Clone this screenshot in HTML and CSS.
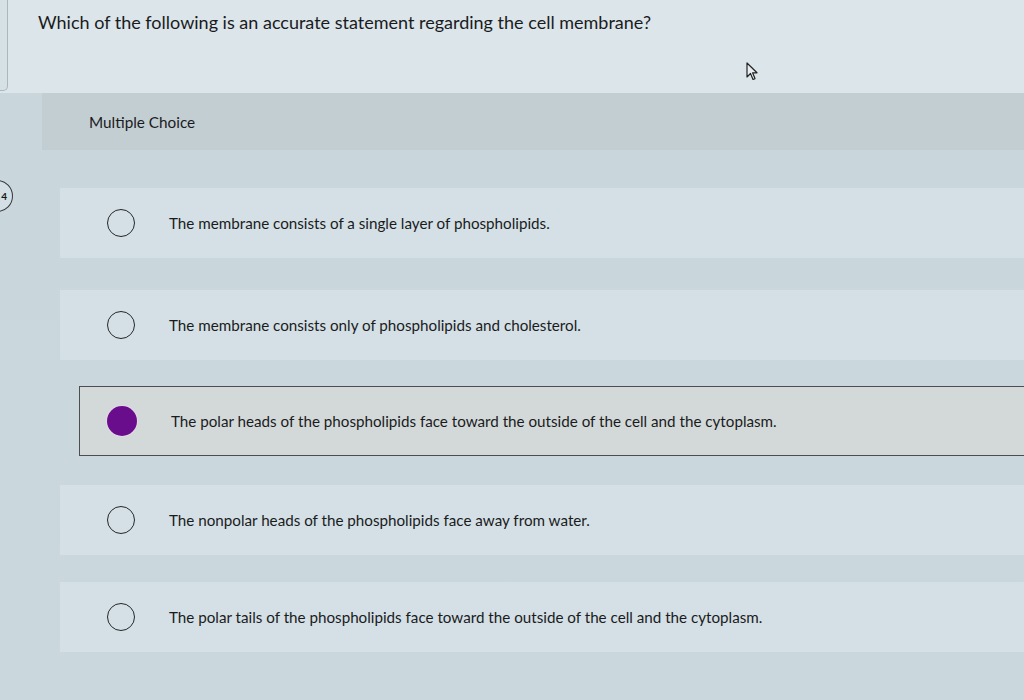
FILE: index.html
```
<!DOCTYPE html>
<html>
<head>
<meta charset="utf-8">
<link rel="stylesheet" href="styles.css">
</head>
<body>
<div class="screen">
  <div class="rail">
    <div class="rail-tab"></div>
    <div class="rail-badge"><span>4</span></div>
  </div>
  <div class="main">
    <div class="question">
      <p class="q-text">Which of the following is an accurate statement regarding the cell membrane?</p>
    </div>
    <div class="band"><span class="band-label">Multiple Choice</span></div>
    <div class="options">
      <div class="option"><span class="radio"></span><span class="opt-text">The membrane consists of a single layer of phospholipids.</span></div>
      <div class="sep s1"></div>
      <div class="option"><span class="radio"></span><span class="opt-text">The membrane consists only of phospholipids and cholesterol.</span></div>
      <div class="sep s2"></div>
      <div class="option selected"><span class="radio filled"></span><span class="opt-text">The polar heads of the phospholipids face toward the outside of the cell and the cytoplasm.</span></div>
      <div class="sep s3"></div>
      <div class="option"><span class="radio"></span><span class="opt-text">The nonpolar heads of the phospholipids face away from water.</span></div>
      <div class="sep s4"></div>
      <div class="option"><span class="radio"></span><span class="opt-text">The polar tails of the phospholipids face toward the outside of the cell and the cytoplasm.</span></div>
    </div>
  </div>
  <svg class="cursor" width="12" height="19" viewBox="0 0 12 19"><path d="M1 1 L1 15 L4.5 11.5 L7 17.5 L9 16.6 L6.6 10.8 L11 10.8 Z" fill="#e8eef0" stroke="#222" stroke-width="1.2" stroke-linejoin="round"/></svg>
</div>
</body>
</html>
```
FILE: styles.css
```
html, body {
  margin: 0;
  padding: 0;
}
body {
  width: 1024px;
  height: 700px;
  overflow: hidden;
  background: #c9d7dd;
  font-family: Lato, "Open Sans", sans-serif;
  color: #151618;
}
.screen {
  position: relative;
  display: flex;
  width: 1024px;
  height: 700px;
  background: linear-gradient(#dbe5ea 0, #dbe5ea 93px, #c9d7dd 93px, #cad8de 700px);
}
.rail {
  position: relative;
  width: 10px;
  flex: none;
}
.rail-tab {
  width: 7px;
  height: 90px;
  border-right: 1px solid #a9b8be;
  border-bottom: 1px solid #a9b8be;
  border-bottom-right-radius: 5px;
  background: #d6e1e6;
}
.rail-badge {
  position: absolute;
  left: -18px;
  top: 180px;
  width: 29px;
  height: 30px;
  border: 1.5px solid #34393d;
  border-radius: 50%;
  background: #d3dfe4;
  font-size: 10px;
  font-weight: 700;
  display: flex;
  align-items: center;
  justify-content: flex-end;
}
.rail-badge span {
  margin-right: 5px;
}
.main {
  flex: 1;
  display: flex;
  flex-direction: column;
}
.question {
  height: 93px;
  padding-left: 28px;
}
.q-text {
  margin: 10px 0 0;
  font-size: 18px;
  line-height: 24px;
  color: #1a1b1d;
}
.band {
  height: 57px;
  margin-left: 32px;
  background: #c3ced3;
  display: flex;
  align-items: center;
  padding-left: 47px;
}
.band-label {
  font-size: 15.3px;
  color: #1a1b1d;
  margin-top: 1px;
}
.options {
  display: flex;
  flex-direction: column;
  margin-left: 50px;
  padding-top: 38px;
}
.option {
  height: 70px;
  display: flex;
  align-items: center;
  padding-left: 47px;
  background: #d4e0e5;
}
.option.selected {
  margin-left: 19px;
  padding-left: 27px;
  height: 68px;
  border: 1px solid #4b4d4e;
  border-right: none;
  background: #d3d9d9;
}
.sep.s1 { height: 32px; }
.sep.s2 { height: 26px; }
.sep.s3 { height: 29px; }
.sep.s4 { height: 27px; }
.radio {
  width: 26px;
  height: 26px;
  border: 1.4px solid #24272a;
  border-radius: 50%;
  flex: none;
}
.radio.filled {
  width: 30px;
  height: 30px;
  border: none;
  background: #6a0d8d;
  box-shadow: 0 0 0 1px #e2d8e6;
}
.opt-text {
  margin-left: 34px;
  font-size: 15.2px;
  color: #1a1b1d;
}
.selected .opt-text {
  margin-left: 34px;
}
.cursor {
  position: absolute;
  left: 746px;
  top: 62px;
}
```
